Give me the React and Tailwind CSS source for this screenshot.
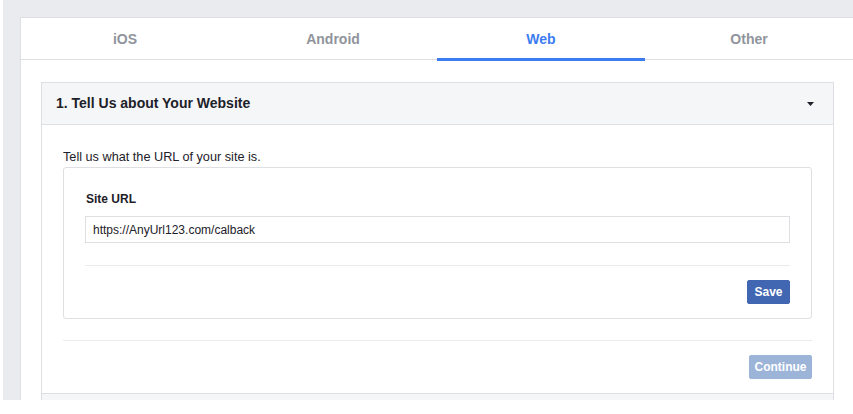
import React, { useState } from "react";

const tabs = ["iOS", "Android", "Web", "Other"];

const App = () => {
  const [active, setActive] = useState("Web");
  const [url, setUrl] = useState("https://AnyUrl123.com/calback");

  return (
    <div
      className="w-[853px] h-[414px] bg-white overflow-hidden"
      style={{ fontFamily: "'Liberation Sans', Arial, sans-serif" }}
    >
      <div className="ml-[3px] h-[400px] bg-[#e9ebee] pl-[17px] pt-[17px] overflow-hidden">
        <div className="h-full bg-white border-l border-t border-[#dddfe2] overflow-hidden">
          {/* tabs */}
          <div className="flex h-[42px] border-b border-[#dddfe2]">
            {tabs.map((t) => (
              <button
                key={t}
                onClick={() => setActive(t)}
                className={
                  "w-[208px] shrink-0 h-[43px] border-b-[3px] text-[14px] font-bold flex items-center justify-center pt-[2px] " +
                  (t === active
                    ? "border-[#3b7cf0] text-[#3b7cf0]"
                    : "border-transparent text-[#90949c]")
                }
              >
                {t}
              </button>
            ))}
          </div>

          {/* panel */}
          <div className="ml-[20px] mt-[22px] w-[793px] border border-[#dddfe2] border-b-0">
            <div className="h-[42px] bg-[#f5f6f7] border-b border-[#dddfe2] flex items-center justify-between pl-[14px] pr-[19px]">
              <span className="text-[14px] font-bold text-[#1d2129]">
                1. Tell Us about Your Website
              </span>
              <svg width="7" height="4" viewBox="0 0 7 4">
                <path d="M0 0 H7 L3.5 4 Z" fill="#1d2129" />
              </svg>
            </div>

            <div className="px-[21px] pt-[24px] pb-[14px]">
              <p className="text-[12.7px] leading-[16px] text-[#1d2129]">
                Tell us what the URL of your site is.
              </p>
              <div className="mt-[2px] border border-[#dddfe2] rounded-[3px] px-[21px] pt-[23px] pb-[14px]">
                <label className="block text-[12px] leading-[16px] font-bold text-[#1d2129] pl-px">
                  Site URL
                </label>
                <input
                  type="text"
                  value={url}
                  onChange={(e) => setUrl(e.target.value)}
                  className="mt-[9px] block w-full h-[27px] border border-[#dddfe2] px-[7px] text-[12px] text-[#1d2129] outline-none"
                />
                <div className="mt-[22px] border-t border-[#e9ebee]"></div>
                <div className="mt-[14px] flex justify-end">
                  <button className="w-[43px] h-[24px] rounded-[2px] bg-[#4267b2] border border-[#4267b2] text-white text-[12px] font-bold">
                    Save
                  </button>
                </div>
              </div>
              <div className="mt-[21px] border-t border-[#e9ebee]"></div>
              <div className="mt-[14px] flex justify-end">
                <button className="w-[63px] h-[24px] rounded-[2px] bg-[#9cb4d8] border border-[#9cb4d8] text-white text-[12px] font-bold">
                  Continue
                </button>
              </div>
            </div>

            <div className="h-[42px] bg-[#f5f6f7] border-t border-[#dddfe2]"></div>
          </div>
        </div>
      </div>
    </div>
  );
};

export default App;
